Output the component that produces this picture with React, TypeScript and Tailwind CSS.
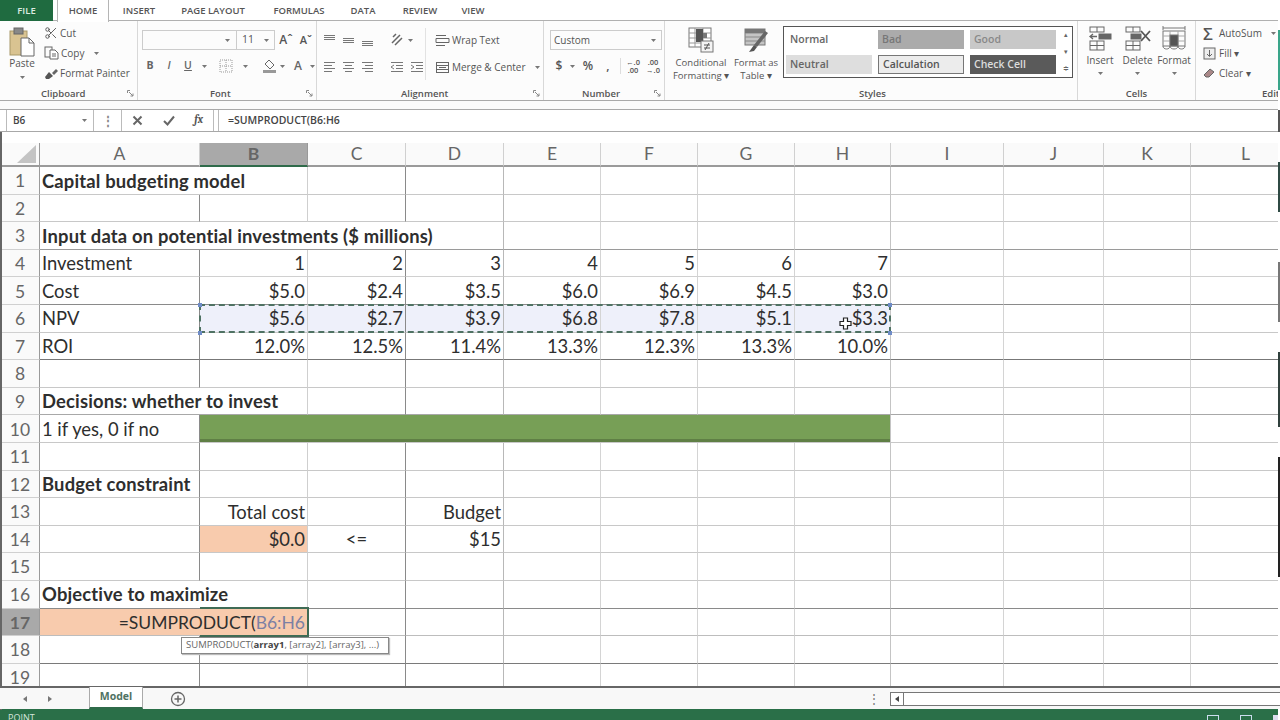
import React from "react";
import { Scissors } from "lucide-react";

const Caret = () => (
  <svg width="5" height="3" viewBox="0 0 5 3" className="shrink-0"><path d="M0 0h5L2.5 3z" fill="#777" /></svg>
);

const Launcher = () => (
  <svg width="7" height="7" viewBox="0 0 7 7" className="absolute right-[3px] bottom-[3px]">
    <path d="M.5 3V.5H3M2 2l4 4M6 3.5V6H3.5" fill="none" stroke="#888" strokeWidth="1" />
  </svg>
);

const Group = ({ w, label, lw, children }: { w: string; label: string; lw?: string; children: React.ReactNode }) => (
  <div className={`${w} relative flex flex-col shrink-0 h-full border-r border-[#d8d8d8]`}>
    <div className="h-[66px] flex pt-[5px]">{children}</div>
    <div className={`h-[13px] text-[9.5px] leading-[13px] text-[#555] font-semibold ${lw ?? "text-center"}`}>{label}</div>
  </div>
);

const Lines = ({ kind }: { kind: "top" | "mid" | "bot" | "left" | "center" | "right" }) => {
  const d: Record<string, string> = {
    top: "M1 2.500h11M1 4.500h11M1 6.500h11",
    mid: "M1 5.500h11M1 7.500h11M1 9.500h11",
    bot: "M1 8.500h11M1 10.500h11M1 12.500h11",
    left: "M1 2.500h11M1 5.500h8M1 8.500h11M1 11.500h8",
    center: "M1 2.500h11M3 5.500h7M1 8.500h11M3 11.500h7",
    right: "M1 2.500h11M4 5.500h8M1 8.500h11M4 11.500h8",
  };
  return <svg width="13" height="14" viewBox="0 0 13 14"><path d={d[kind]} stroke="#777" strokeWidth="1" fill="none" /></svg>;
};

const PasteIcon = () => (
  <svg width="26" height="32" viewBox="0 0 26 32">
    <rect x="1" y="4" width="17" height="24" fill="#d9c391" stroke="#a89868" />
    <rect x="5" y="1" width="9" height="6" fill="#888" stroke="#666" />
    <path d="M12 11h8l5 5v13H12z" fill="#fff" stroke="#666" />
    <path d="M20 11v5h5" fill="none" stroke="#666" />
  </svg>
);

const CopyIcon = () => (
  <svg width="15" height="14" viewBox="0 0 15 14" fill="none" stroke="#666">
    <rect x="1" y="1" width="7" height="10" />
    <path d="M6 4h5l3 3v6H6z" fill="#fff" />
    <path d="M8 8h4M8 10h4" />
  </svg>
);

const BrushIcon = () => (
  <svg width="15" height="13" viewBox="0 0 15 13">
    <path d="M1 10l4-5 4 4-4 3H2z" fill="#555" />
    <path d="M8 6l4-4 2 2-4 4z" fill="#666" />
  </svg>
);

const CondIcon = () => (
  <svg width="26" height="26" viewBox="0 0 26 26">
    <rect x="1" y="1" width="22" height="19" fill="#fff" stroke="#777" />
    <path d="M1 6h22M1 11h22M1 16h22M7 1v19M15 1v19" stroke="#999" />
    <rect x="8" y="2" width="7" height="13" fill="#555" />
    <rect x="15" y="6" width="4" height="5" fill="#777" />
    <rect x="13" y="14" width="12" height="11" fill="#f4f4f4" stroke="#777" />
    <path d="M16 18h6M16 21h6M21 16l-4 7" stroke="#555" fill="none" />
  </svg>
);

const TableIcon = () => (
  <svg width="27" height="26" viewBox="0 0 27 26">
    <rect x="2" y="2" width="20" height="16" fill="#c4c4c4" stroke="#777" />
    <path d="M2 6h20M2 10h20M2 14h20" stroke="#888" />
    <rect x="2" y="2" width="20" height="4" fill="#777" />
    <path d="M25 6L14 20l-3-2L22 4z" fill="#666" />
    <path d="M11 18l3 2-3 4-5 1z" fill="#555" />
  </svg>
);

const InsertIcon = () => (
  <svg width="24" height="25" viewBox="0 0 24 25" fill="none" stroke="#666">
    <rect x="2" y="1" width="14" height="5" />
    <path d="M9 1v5" />
    <rect x="2" y="15" width="14" height="9" />
    <path d="M9 15v9M2 19.500h14" />
    <rect x="11" y="8" width="12" height="5" fill="#666" />
    <path d="M9 10.500H2M5 8l-3 2.500L5 13" strokeWidth="1.300" />
  </svg>
);

const DeleteIcon = () => (
  <svg width="26" height="25" viewBox="0 0 26 25" fill="none" stroke="#666">
    <rect x="1" y="1" width="14" height="5" />
    <path d="M8 1v5" />
    <rect x="1" y="15" width="14" height="9" />
    <path d="M8 15v9M1 19.500h14" />
    <rect x="6" y="8" width="10" height="5" fill="#666" />
    <path d="M16 5l9 10M25 5L16 15" strokeWidth="1.800" stroke="#555" />
  </svg>
);

const FormatIcon = () => (
  <svg width="26" height="26" viewBox="0 0 26 26" fill="none" stroke="#777">
    <path d="M2 2h22M2 0v4M24 0v4" />
    <rect x="2" y="5" width="22" height="15" />
    <path d="M9 5v15M17 5v15M2 10h22M2 15h22" stroke="#aaa" />
    <rect x="9" y="9" width="8" height="11" fill="#555" />
    <path d="M2 20c0 4 7 4 7 0c0 4 8 4 8 0c0 4 7 4 7 0" />
  </svg>
);

const StyleCell = ({ cls, children }: { cls: string; children: React.ReactNode }) => (
  <div className={`w-[86px] h-[19px] flex items-center pl-[4px] text-[10.5px] font-semibold ${cls}`}>{children}</div>
);

const Ribbon = () => (
  <div className="h-[80px] flex bg-[#fcfcfc] border-b border-[#a8a8a8] text-[#555] text-[10px]">
    <Group w="w-[138px]" label="Clipboard" lw="pl-[41px]">
      <div className="w-[44px] flex flex-col items-center pt-[1px]">
        <PasteIcon />
        <span className="leading-[13px] mt-[-2px]">Paste</span>
        <div className="mt-[6px]"><Caret /></div>
      </div>
      <div className="flex flex-col mt-[-3px]">
        <div className="h-[20px] flex items-center gap-[2px]"><Scissors size={14} strokeWidth={1.6} color="#555" /><span>Cut</span></div>
        <div className="h-[20px] flex items-center gap-[2px]"><CopyIcon /><span>Copy</span><span className="ml-[8px]"><Caret /></span></div>
        <div className="h-[20px] flex items-center gap-[1px]"><BrushIcon /><span>Format Painter</span></div>
      </div>
      <Launcher />
    </Group>

    <Group w="w-[179px]" label="Font" lw="pl-[72px]">
      <div className="pl-[4px] flex flex-col">
        <div className="flex items-center h-[20px] mt-[4px]">
          <div className="w-[95px] h-[20px] border border-[#ccc] flex items-center justify-end pr-[6px]"><Caret /></div>
          <div className="w-[38px] h-[20px] border border-l-0 border-[#ccc] flex items-center justify-between px-[5px] text-[10.5px]"><span>11</span><Caret /></div>
          <span className="w-[20px] text-center text-[12px] font-semibold ml-[1px]">Aˆ</span>
          <span className="w-[20px] text-center text-[11px] font-semibold">Aˇ</span>
        </div>
        <div className="flex items-center h-[20px] mt-[6px] text-[10.5px] font-semibold text-[#666]">
          <span className="w-[20px] text-center font-bold ml-[-2px]">B</span>
          <span className="w-[18px] text-center italic">I</span>
          <span className="w-[20px] text-center underline">U</span>
          <span className="w-[12px] flex justify-center"><Caret /></span>
          <span className="w-[26px] flex justify-center ml-[3px]">
            <svg width="14" height="14" viewBox="0 0 14 14" fill="none" stroke="#999" strokeDasharray="1 1"><rect x="1" y="1" width="12" height="12" /><path d="M7 1v12M1 7h12" /></svg>
          </span>
          <span className="w-[12px] flex justify-center"><Caret /></span>
          <span className="w-[26px] flex justify-center ml-[5px]">
            <svg width="15" height="15" viewBox="0 0 15 15"><path d="M7 1l5 5-4 4-5-5z" fill="none" stroke="#666" /><rect x="1" y="11" width="13" height="3" fill="#999" /></svg>
          </span>
          <span className="w-[6px] flex justify-center ml-[-3px]"><Caret /></span>
          <span className="w-[26px] text-center text-[12px]">A</span>
          <span className="w-[2px] flex justify-center"><Caret /></span>
        </div>
      </div>
      <Launcher />
    </Group>

    <Group w="w-[227px]" label="Alignment" lw="pl-[84px]">
      <div className="pl-[6px] w-[109px] flex flex-col border-r border-[#e2e2e2] h-[52px] mt-[2px]">
        <div className="flex items-center h-[24px] gap-[6px]">
          <Lines kind="top" /><Lines kind="mid" /><Lines kind="bot" />
          <span className="ml-[10px] flex items-center gap-[3px]">
            <svg width="15" height="14" viewBox="0 0 15 14" fill="none" stroke="#666"><path d="M2 10l8-8M5 12l7-7M3 4l3-3" strokeWidth="1.500" /></svg>
            <Caret />
          </span>
        </div>
        <div className="flex items-center h-[24px] gap-[6px] mt-[3px]">
          <Lines kind="left" /><Lines kind="center" /><Lines kind="right" />
          <span className="ml-[10px] flex gap-[6px]">
            <svg width="14" height="12" viewBox="0 0 14 12" stroke="#777" fill="none"><path d="M1 1.500h12M6 4.500h7M6 7.500h7M1 10.500h12M4 4L1 6l3 2" /></svg>
            <svg width="14" height="12" viewBox="0 0 14 12" stroke="#777" fill="none"><path d="M1 1.500h12M6 4.500h7M6 7.500h7M1 10.500h12M1 4l3 2-3 2" /></svg>
          </span>
        </div>
      </div>
      <div className="pl-[9px] flex flex-col mt-[2px]">
        <div className="flex items-center h-[24px] gap-[2px]">
          <svg width="15" height="13" viewBox="0 0 15 13" fill="none" stroke="#666"><path d="M1 1.500h10M1 4.500h13v4H1zM1 11.500h9" /></svg>
          <span>Wrap Text</span>
        </div>
        <div className="flex items-center h-[24px] gap-[2px] mt-[3px]">
          <svg width="15" height="13" viewBox="0 0 15 13" fill="none" stroke="#666"><rect x="1.500" y="1.500" width="12" height="10" /><path d="M1 4.500h13M1 8.500h13M4 6.500h7" /></svg>
          <span>Merge &amp; Center</span>
          <span className="ml-[7px]"><Caret /></span>
        </div>
      </div>
      <Launcher />
    </Group>

    <Group w="w-[121px]" label="Number" lw="pl-[38px]">
      <div className="pl-[6px] flex flex-col">
        <div className="w-[112px] h-[20px] mt-[4px] border border-[#ccc] flex items-center justify-between px-[3px] pr-[5px]"><span>Custom</span><Caret /></div>
        <div className="flex items-center h-[20px] mt-[6px] text-[12px] font-semibold">
          <span className="w-[18px] text-center">$</span>
          <span className="w-[8px] flex justify-center"><Caret /></span>
          <span className="w-[22px] text-center ml-[1px]">%</span>
          <span className="w-[18px] text-center">,</span>
          <span className="w-[1px] h-[16px] bg-[#ddd] ml-[3px]" />
          <span className="w-[24px] text-center text-[7.5px] leading-[8px]">←.0<br />.00</span>
          <span className="w-[16px] text-center text-[7.5px] leading-[8px]">.00<br />→.0</span>
        </div>
      </div>
      <Launcher />
    </Group>

    <Group w="w-[413px]" label="Styles" lw="pl-[194px]">
      <div className="w-[72px] flex flex-col items-center pt-[1px] text-[9.5px]">
        <CondIcon />
        <span className="leading-[13px] text-center mt-[3px] whitespace-nowrap">Conditional<br />Formatting ▾</span>
      </div>
      <div className="w-[36px] ml-[1px] flex flex-col items-center pt-[1px] text-[9.5px]">
        <TableIcon />
        <span className="leading-[13px] text-center mt-[3px] whitespace-nowrap">Format as<br />Table ▾</span>
      </div>
      <div className="ml-[9px] h-[52px] w-[290px] border border-[#555] flex bg-white">
        <div className="grid grid-cols-[86px_86px_86px] gap-x-[6px] gap-y-[5px] p-[2px] pt-[3px] w-[277px] shrink-0">
          <StyleCell cls="text-[#666]">Normal</StyleCell>
          <StyleCell cls="bg-[#ababab] text-[#777]">Bad</StyleCell>
          <StyleCell cls="bg-[#c8c8c8] text-[#888]">Good</StyleCell>
          <StyleCell cls="bg-[#dedede] text-[#666]">Neutral</StyleCell>
          <StyleCell cls="bg-[#ececec] text-[#555] border border-[#777]">Calculation</StyleCell>
          <StyleCell cls="bg-[#5a5a5a] text-[#ddd]">Check Cell</StyleCell>
        </div>
        <div className="flex-1 flex flex-col items-center justify-around text-[7px] leading-[8px] text-[#666] pr-[2px]">
          <span>▴</span><span>▾</span><span>≑</span>
        </div>
      </div>
    </Group>

    <Group w="w-[118px]" label="Cells">
      <div className="w-[42px] flex flex-col items-center pl-[2px]"><InsertIcon /><span className="leading-[13px] mt-[3px]">Insert</span><div className="mt-[5px]"><Caret /></div></div>
      <div className="w-[35px] flex flex-col items-center"><DeleteIcon /><span className="leading-[13px] mt-[3px]">Delete</span><div className="mt-[5px]"><Caret /></div></div>
      <div className="w-[38px] flex flex-col items-center"><FormatIcon /><span className="leading-[13px] mt-[2px]">Format</span><div className="mt-[5px]"><Caret /></div></div>
    </Group>

    <div className="flex-1 relative flex flex-col h-full overflow-hidden">
      <div className="h-[66px] flex flex-col pt-[1px] pl-[7px]">
        <div className="h-[22px] flex items-center"><span className="w-[16px] text-[17px] leading-[17px] text-[#555] font-semibold">Σ</span><span>AutoSum</span><span className="ml-[9px]"><Caret /></span></div>
        <div className="h-[19px] flex items-center gap-[3px]">
          <svg width="13" height="13" viewBox="0 0 13 13" fill="#eee" stroke="#666"><rect x="1" y="1" width="11" height="11" /><path d="M6.500 3v6M4 7l2.500 2.500L9 7" fill="none" /></svg>
          <span>Fill ▾</span>
        </div>
        <div className="h-[20px] flex items-center gap-[3px]">
          <svg width="13" height="12" viewBox="0 0 13 12"><path d="M1 8l6-6 4 3-5 5H3z" fill="#a88" stroke="#666" /></svg>
          <span>Clear ▾</span>
        </div>
      </div>
      <div className="h-[13px] text-[9.5px] leading-[13px] font-semibold pl-[66px] whitespace-nowrap">Editing</div>
    </div>
  </div>
);

type CellDef = { t?: React.ReactNode; span?: number; a?: "r" | "c" | "l"; b?: boolean; bg?: string };

const rowsData: Record<number, Record<number, CellDef>> = {
  1: { 0: { t: "Capital budgeting model", b: true, span: 2 } },
  3: { 0: { t: "Input data on potential investments ($ millions)", b: true, span: 4 } },
  4: { 0: { t: "Investment" }, 1: { t: "1", a: "r" }, 2: { t: "2", a: "r" }, 3: { t: "3", a: "r" }, 4: { t: "4", a: "r" }, 5: { t: "5", a: "r" }, 6: { t: "6", a: "r" }, 7: { t: "7", a: "r" } },
  5: { 0: { t: "Cost" }, 1: { t: "$5.0", a: "r" }, 2: { t: "$2.4", a: "r" }, 3: { t: "$3.5", a: "r" }, 4: { t: "$6.0", a: "r" }, 5: { t: "$6.9", a: "r" }, 6: { t: "$4.5", a: "r" }, 7: { t: "$3.0", a: "r" } },
  6: {
    0: { t: "NPV" },
    1: { t: "$5.6", a: "r", bg: "bg-[#eef0fa]" }, 2: { t: "$2.7", a: "r", bg: "bg-[#eef0fa]" }, 3: { t: "$3.9", a: "r", bg: "bg-[#eef0fa]" },
    4: { t: "$6.8", a: "r", bg: "bg-[#eef0fa]" }, 5: { t: "$7.8", a: "r", bg: "bg-[#eef0fa]" }, 6: { t: "$5.1", a: "r", bg: "bg-[#eef0fa]" }, 7: { t: "$3.3", a: "r", bg: "bg-[#eef0fa]" },
  },
  7: { 0: { t: "ROI" }, 1: { t: "12.0%", a: "r" }, 2: { t: "12.5%", a: "r" }, 3: { t: "11.4%", a: "r" }, 4: { t: "13.3%", a: "r" }, 5: { t: "12.3%", a: "r" }, 6: { t: "13.3%", a: "r" }, 7: { t: "10.0%", a: "r" } },
  9: { 0: { t: "Decisions: whether to invest", b: true, span: 2 } },
  10: { 0: { t: "1 if yes, 0 if no" }, 1: { span: 7, bg: "bg-[#779f56]" } },
  12: { 0: { t: "Budget constraint", b: true } },
  13: { 1: { t: "Total cost", a: "r" }, 3: { t: "Budget", a: "r" } },
  14: { 1: { t: "$0.0", a: "r", bg: "bg-[#f8cbad]" }, 2: { t: "<=", a: "c" }, 3: { t: "$15", a: "r" } },
  16: { 0: { t: "Objective to maximize", b: true, span: 2 } },
  17: {
    0: {
      span: 2, a: "r", bg: "bg-[#f8cbad]",
      t: <span className="text-[17.5px]">=SUMPRODUCT(<span className="text-[#7c80a4]">B6:H6</span></span>,
    },
  },
};

const rowLine: Record<number, string> = {
  1: "border-b-[#c8c8c8]", 2: "border-b-[#c8c8c8]", 3: "border-b-[#9a9a9a]", 4: "border-b-[#d0d0d0]", 5: "border-b-[#8a8a8a]",
  6: "border-b-[#c8c8c8]", 7: "border-b-[#777777]", 8: "border-b-[#c8c8c8]", 9: "border-b-[#a8a8a8]", 10: "border-b-[#c8c8c8]",
  11: "border-b-[#c8c8c8]", 12: "border-b-[#c8c8c8]", 13: "border-b-[#c8c8c8]", 14: "border-b-[#c8c8c8]", 15: "border-b-[#c8c8c8]",
  16: "border-b-[#8a8a8a]", 17: "border-b-[#bdbdbd]", 18: "border-b-[#7a7a7a]", 19: "border-b-[#c8c8c8]",
};

const colLine = [
  "border-r-[#8a8a8a]", "border-r-[#cfcfcf]", "border-r-[#8a8a8a]", "border-r-[#b8b8b8]", "border-r-[#d4d4d4]", "border-r-[#d4d4d4]",
  "border-r-[#d4d4d4]", "border-r-[#c4c4c4]", "border-r-[#d4d4d4]", "border-r-[#d4d4d4]", "border-r-[#d4d4d4]", "border-r-transparent",
];

const spanCls: Record<number, string> = { 1: "col-span-1", 2: "col-span-2", 3: "col-span-3", 4: "col-span-4", 7: "col-span-7" };
const cols = ["A", "B", "C", "D", "E", "F", "G", "H", "I", "J", "K", "L"];

const Row = ({ r }: { r: number }) => {
  const defs = rowsData[r] ?? {};
  const out: React.ReactNode[] = [];
  let c = 0;
  while (c < 12) {
    const d = defs[c] ?? {};
    const span = d.span ?? 1;
    const end = c + span - 1;
    const align = d.a === "r" ? "justify-end pr-[2px]" : d.a === "c" ? "justify-center" : "justify-start pl-[2px]";
    out.push(
      <div
        key={c}
        className={`${spanCls[span]} flex items-center whitespace-nowrap border-b border-r h-[27.6px] pt-[2px] ${align} ${rowLine[r]} ${colLine[end]} ${d.b ? "font-bold tracking-[0.17px]" : ""} ${d.bg ?? ""}`}
      >
        {d.t}
      </div>
    );
    c += span;
  }
  return (
    <>
      <div className={`flex items-center justify-center h-[27.6px] pt-[2px] border-r border-b border-r-[#9a9a9a] border-b-[#d0d0d0] pl-[1px] text-[17.5px] text-[#666] ${r === 17 ? "bg-[#a9a9a9] font-bold text-[#2f6148]" : "bg-[#fafafa]"}`}>{r}</div>
      {out}
    </>
  );
};

const Sheet = () => (
  <div className="flex-1 relative overflow-hidden bg-white pt-[11px] font-['Lato','Noto_Sans',sans-serif] text-[18.4px] text-[#2e2e2e]">
    <div className="grid grid-cols-[40px_160px_108px_98px_98px_97px_97px_97px_96px_113px_100px_87px_89px]">
      <div className="h-[24px] flex items-end justify-end border-b-2 border-r border-[#9a9a9a] bg-[#fafafa] pr-[3px] pb-[2px]">
        <svg width="19" height="18" viewBox="0 0 19 18"><path d="M19 0v18H0z" fill="#c4c4c4" /></svg>
      </div>
      {cols.map((c) => (
        <div
          key={c}
          className={`h-[24px] flex items-center justify-center border-r border-b-2 text-[17.5px] text-[#666] ${c === "L" ? "pl-[21px]" : ""} ${c === "B" ? "bg-[#a9a9a9] font-bold text-[#2f6148] border-b-[#2f6b4a] border-r-[#999]" : "bg-[#fafafa] border-b-[#9a9a9a] border-r-[#d0d0d0]"}`}
        >
          {c}
        </div>
      ))}
      {Array.from({ length: 19 }, (_, i) => <Row key={i} r={i + 1} />)}
    </div>

    {/* copy marquee around row 6 */}
    <div className="absolute left-[199px] top-[172px] w-[692px] h-[29px] border-2 border-dashed border-[#4f7263]" />
    <div className="absolute left-[198px] top-[171px] w-[4px] h-[4px] bg-[#6f8cc8]" />
    <div className="absolute left-[888px] top-[171px] w-[4px] h-[4px] bg-[#6f8cc8]" />
    <div className="absolute left-[198px] top-[199px] w-[4px] h-[4px] bg-[#6f8cc8]" />
    <div className="absolute left-[888px] top-[199px] w-[4px] h-[4px] bg-[#6f8cc8]" />

    {/* green cells' darker lower edge */}
    <div className="absolute left-[200px] top-[307px] w-[690px] h-[3px] bg-[#5f7f45]" />

    {/* active cell outline */}
    <div className="absolute left-[200px] top-[475px] w-[109px] h-[30px] border-2 border-l-0 border-[#3f6b55]" />

    {/* mouse cursor */}
    <svg width="13" height="13" viewBox="0 0 13 13" className="absolute left-[839px] top-[185px]">
      <path d="M4.500 1h4v3.500H12v4H8.500V12h-4V8.500H1v-4h3.500z" fill="#fff" stroke="#222" strokeWidth="1.200" />
    </svg>

    {/* function tooltip */}
    <div className="absolute left-[181px] top-[505px] h-[17px] w-[208px] bg-white border border-[#888] shadow-[1px_1px_1px_#bbb] flex items-center pl-[4px] whitespace-nowrap font-['Open_Sans',sans-serif] text-[9.5px] text-[#666]">
      SUMPRODUCT(<b className="text-[#444]">array1</b>, [array2], [array3], ...)
    </div>
  </div>
);

const EdgeStrip = () => (
  <div className="absolute right-0 top-0 w-[2px] h-[720px] flex flex-col">
    <div className="h-[30px] bg-white" />
    <div className="h-[60px] bg-[#3aa58a]" />
    <div className="h-[20px] bg-white" />
    <div className="h-[22px] bg-[#555]" />
    <div className="h-[30px] bg-white" />
    <div className="h-[50px] bg-[#2f4a44]" />
    <div className="h-[50px] bg-white" />
    <div className="h-[60px] bg-[#777]" />
    <div className="h-[30px] bg-white" />
    <div className="h-[75px] bg-[#30403c]" />
    <div className="h-[30px] bg-white" />
    <div className="h-[120px] bg-[#222]" />
    <div className="flex-1 bg-white" />
  </div>
);

const tabs: [string, string][] = [
  ["HOME", "w-[52px] bg-white border-l border-r border-[#b5b5b5] h-[22px] relative z-10 ml-[4px]"],
  ["INSERT", "w-[60px]"],
  ["PAGE LAYOUT", "w-[88px]"],
  ["FORMULAS", "w-[84px]"],
  ["DATA", "w-[44px]"],
  ["REVIEW", "w-[70px]"],
  ["VIEW", "w-[36px]"],
];

export default function App() {
  return (
    <div className="relative w-[1280px] h-[720px] overflow-hidden bg-white flex flex-col font-['Open_Sans','Noto_Sans',sans-serif]">
      <div className="h-[21px] flex items-start border-b border-[#b0b0b0] bg-white text-[9.5px] font-semibold text-[#555] shrink-0">
        <div className="w-[53px] h-[21px] bg-[#1f6b40] text-[#dcebe2] flex items-center justify-center pt-[1px]">FILE</div>
        {tabs.map(([t, c]) => (
          <div key={t} className={`${c} h-[21px] pt-[1px] flex items-center justify-center`}>{t}</div>
        ))}
      </div>
      <Ribbon />
      <div className="h-[8px] bg-[#fafafa] shrink-0" />
      <div className="h-[23px] flex items-center border-y border-[#a8a8a8] bg-white text-[10px] text-[#444] font-semibold shrink-0">
        <div className="ml-[6px] w-[88px] h-[21px] border-x border-[#bbb] flex items-center justify-between px-[6px]"><span>B6</span><Caret /></div>
        <div className="w-[27px] flex justify-center text-[#888] text-[12px] leading-[12px]">⋮</div>
        <div className="w-[93px] h-[21px] border-x border-[#bbb] flex items-center justify-around">
          <svg width="11" height="11" viewBox="0 0 11 11"><path d="M1.500 1.500l8 8M9.500 1.500l-8 8" stroke="#666" strokeWidth="2" /></svg>
          <svg width="12" height="11" viewBox="0 0 12 11"><path d="M1 6l3.500 3.500L11 1.500" stroke="#666" strokeWidth="2" fill="none" /></svg>
          <span className="italic font-serif text-[11px] text-[#555]">fx</span>
        </div>
        <div className="ml-[4px] h-[21px] flex-1 border-l border-[#bbb] flex items-center pl-[9px] text-[10.5px]">=SUMPRODUCT(B6:H6</div>
      </div>
      <Sheet />
      <div className="h-[23px] flex items-center bg-[#f8f8f8] border-t-2 border-[#666] shrink-0 relative z-10">
        <span className="w-[6px] ml-[23px] text-[#888]"><svg width="4" height="6" viewBox="0 0 4 6"><path d="M4 0v6L0 3z" fill="#777" /></svg></span>
        <span className="ml-[19px]"><svg width="4" height="6" viewBox="0 0 4 6"><path d="M0 0v6l4-3z" fill="#777" /></svg></span>
        <div className="ml-[37px] w-[54px] h-[22px] mt-[-1px] bg-white border-x border-b-2 border-x-[#aaa] border-b-[#2f6b4a] flex items-center justify-center text-[10.5px] font-bold text-[#4f7263]">Model</div>
        <span className="ml-[27px]">
          <svg width="16" height="16" viewBox="0 0 16 16" fill="none" stroke="#666"><circle cx="8" cy="8" r="6.500" strokeWidth="1.300" /><path d="M8 4.500v7M4.500 8h7" strokeWidth="1.500" /></svg>
        </span>
        <span className="ml-[682px] text-[#777] text-[12px] leading-[12px]">⋮</span>
        <div className="ml-[10px] flex-1 h-[14px] border border-[#777] border-r-0 bg-white flex">
          <div className="w-[13px] h-full border-r border-[#777] flex items-center justify-center">
            <svg width="4" height="6" viewBox="0 0 4 6"><path d="M4 0v6L0 3z" fill="#444" /></svg>
          </div>
        </div>
      </div>
      <div className="h-[11px] bg-[#2a6f48] shrink-0 relative overflow-hidden flex items-start">
        <span className="ml-[8px] mt-[3px] text-[9px] leading-[11px] text-[#d8e6de]">POINT</span>
        <div className="ml-auto flex gap-[21px] pr-[1px] pt-[6px]">
          <div className="w-[12px] h-[8px] border border-[#cde]" />
          <div className="w-[12px] h-[8px] border border-[#cde]" />
          <div className="w-[6px] h-[8px] bg-[#dde]" />
        </div>
      </div>
      <EdgeStrip />
      <div className="absolute left-0 top-[132px] w-[2px] h-[578px] bg-[#666]" />
    </div>
  );
}
